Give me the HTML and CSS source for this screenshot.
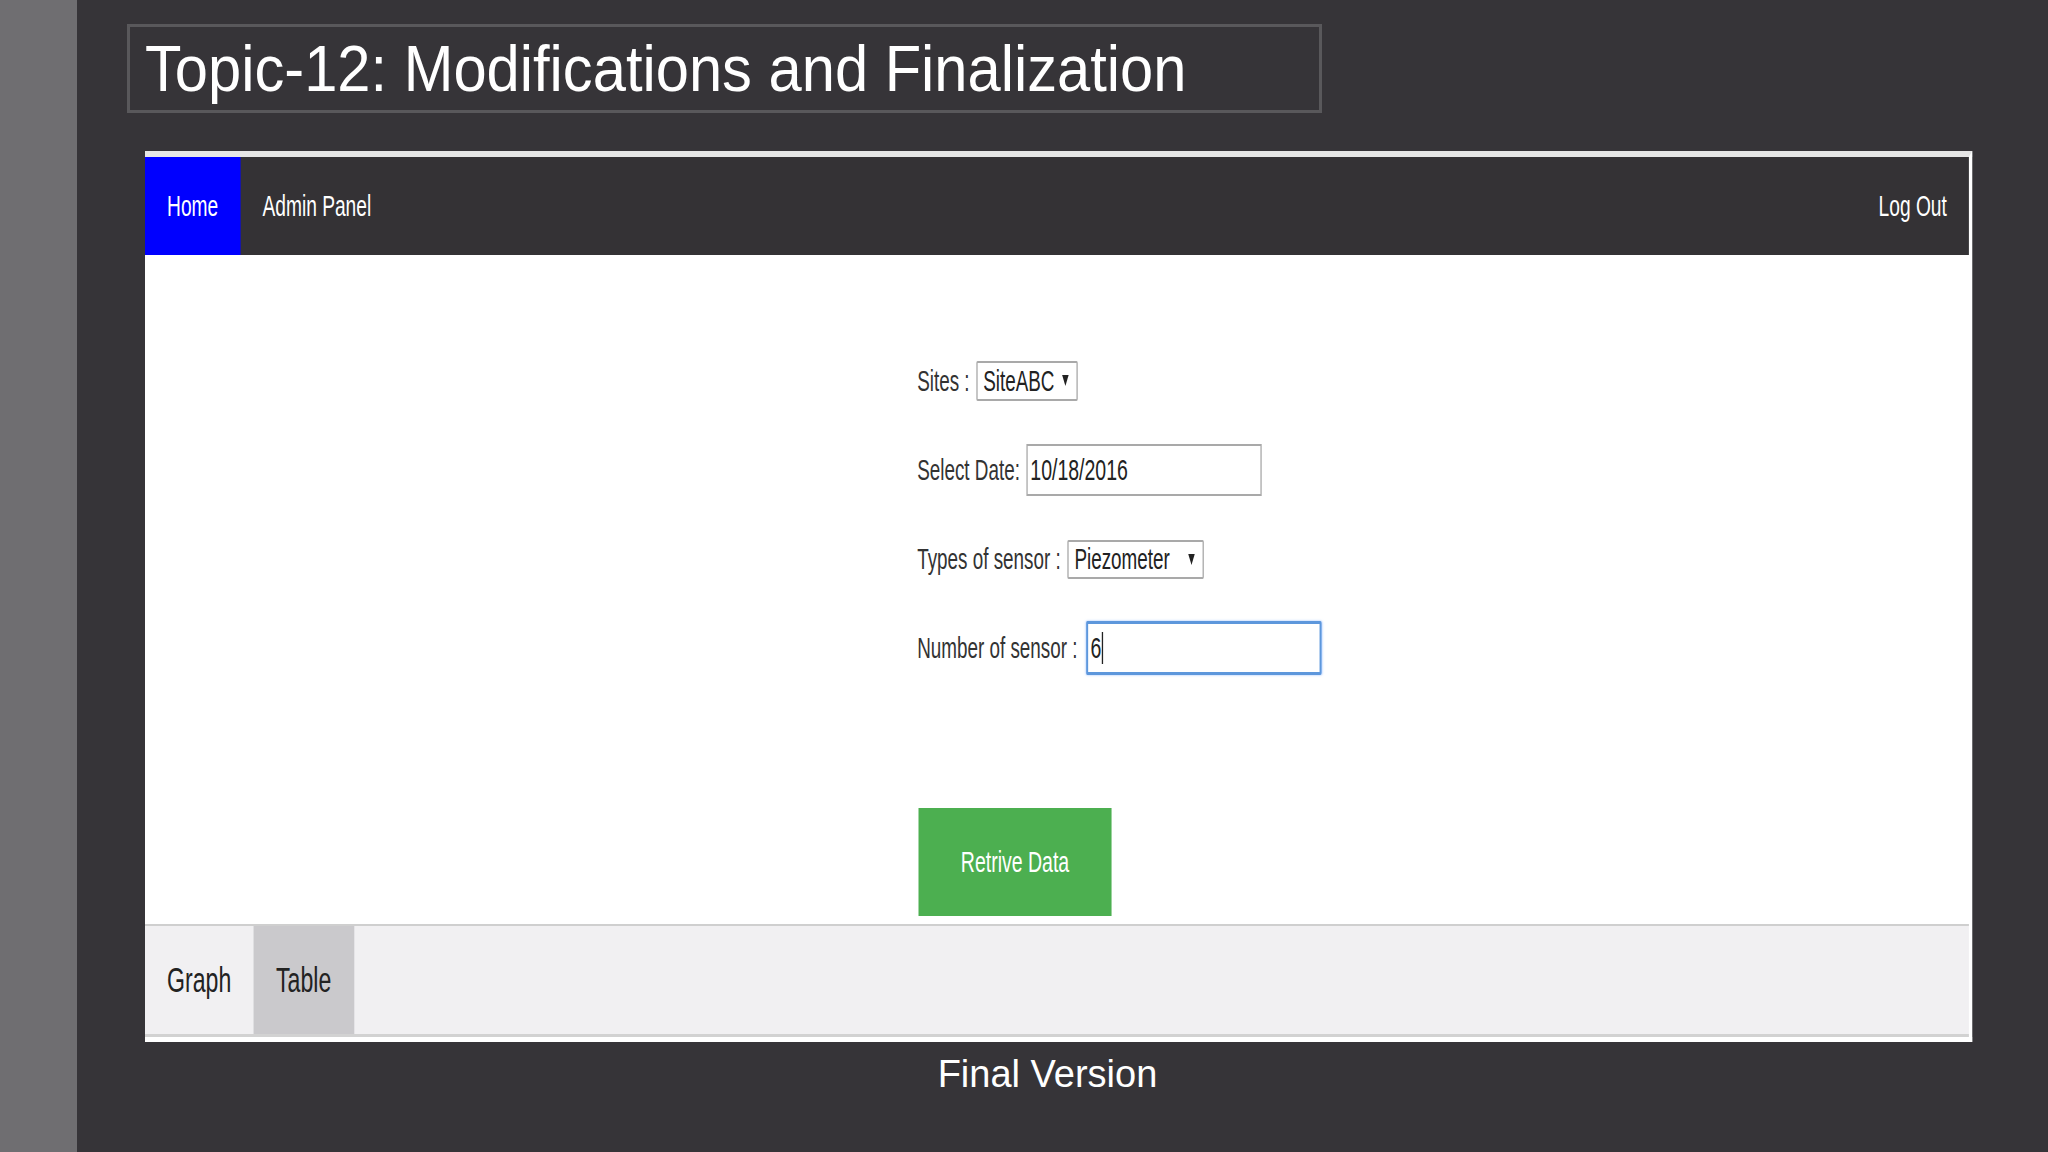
FILE: index.html
```html
<!DOCTYPE html>
<html lang="en">
<head>
    <meta charset="UTF-8">
    <meta name="viewport" content="width=device-width, initial-scale=1.0">
    <title>Topic-12: Modifications and Finalization</title>
    <link rel="stylesheet" href="styles.css">
</head>
<body>
    <div class="slide">
        <div class="side-strip"></div>

        <div class="stage">
            <!-- Slide title -->
            <div class="topic-box">
                <h1 class="topic-title"><span class="topic-text">Topic-12: Modifications and Finalization</span></h1>
            </div>

            <!-- Recorded app screen -->
            <div class="app-frame">
                <nav class="navbar">
                    <a class="nav-link active" href="#">Home</a>
                    <a class="nav-link" href="#">Admin Panel</a>
                    <a class="nav-link logout" href="#">Log Out</a>
                </nav>

                <div class="content">
                    <form class="query-form">
                        <div class="form-row">
                            <label for="sites">Sites :</label>
                            <span class="select-wrap sites-select">
                                <select id="sites">
                                    <option>SiteABC</option>
                                </select>
                            </span>
                        </div>
                        <div class="form-row">
                            <label for="date">Select Date:</label>
                            <input class="text-input" id="date" type="text" value="10/18/2016">
                        </div>
                        <div class="form-row">
                            <label for="sensor-type">Types of sensor :</label>
                            <span class="select-wrap type-select">
                                <select id="sensor-type">
                                    <option>Piezometer</option>
                                </select>
                            </span>
                        </div>
                        <div class="form-row wide-gap">
                            <label for="sensor-count">Number of sensor :</label>
                            <span class="focus-input"><input class="text-input focused" id="sensor-count" type="text" value="6"><span class="caret"></span></span>
                        </div>
                    </form>

                    <button class="retrieve-btn" type="button">Retrive Data</button>
                </div>

                <div class="tab-bar">
                    <span class="tab">Graph</span>
                    <span class="tab selected">Table</span>
                </div>
            </div>

            <p class="caption">Final Version</p>
        </div>
    </div>
</body>
</html>
```

FILE: styles.css
```css
/* Global */
html, body {
    margin: 0;
    padding: 0;
    height: 100%;
    overflow: hidden;
    background-color: #363438;
    font-family: "Liberation Sans", Arial, sans-serif;
}

.slide {
    display: flex;
    height: 1152px;
    overflow: hidden;
}

.side-strip {
    width: 77px;
    flex-shrink: 0;
    background-color: #6f6e71;
}

.stage {
    flex-grow: 1;
    min-width: 0;
    padding: 24px 0 0 50px;
    overflow: hidden;
}

/* Slide title */
.topic-box {
    width: 1195px;
    height: 89px;
    box-sizing: border-box;
    border: 3px solid #59585b;
}

.topic-title {
    margin: 0;
    padding-left: 15px;
    font-size: 65px;
    font-weight: normal;
    line-height: 83px;
    color: #fff;
    white-space: nowrap;
}

.topic-text {
    display: inline-block;
    transform: scaleX(0.918);
    transform-origin: left center;
}

/* App screen (recorded squeezed horizontally) */
.app-frame {
    width: 2811px;
    box-sizing: border-box;
    margin: 38px 0 0 18px;
    border-top: 6px solid #e6e6e6;
    border-right: 5px solid #fff;
    border-bottom: 5px solid #fff;
    background-color: #fff;
    transform: scaleX(0.65);
    transform-origin: 0 0;
}

.navbar {
    display: flex;
    align-items: stretch;
    height: 98px;
    background-color: #343235;
}

.nav-link {
    display: flex;
    align-items: center;
    padding: 0 34px;
    font-size: 29.5px;
    color: #fff;
    text-decoration: none;
}

.nav-link.active {
    background-color: #0000ff;
}

.nav-link.logout {
    margin-left: auto;
}

/* Form */
.content {
    height: 669px;
    box-sizing: border-box;
    padding-top: 99px;
}

.query-form {
    display: flex;
    flex-direction: column;
    gap: 35px;
    padding-left: 1188px;
}

.form-row {
    display: flex;
    align-items: center;
    gap: 10px;
    height: 54px;
    font-size: 29px;
    color: #333;
}

.form-row.wide-gap {
    gap: 13px;
}

.select-wrap {
    position: relative;
    display: inline-block;
}

.select-wrap select {
    appearance: none;
    -webkit-appearance: none;
    height: 40px;
    box-sizing: border-box;
    border: 2px solid #a9a9a9;
    border-radius: 2px;
    background-color: #fff;
    padding: 0 0 0 9px;
    font-family: inherit;
    font-size: 29px;
    color: #222;
}

.sites-select select {
    width: 156px;
}

.type-select select {
    width: 210px;
    height: 39px;
}

.select-wrap::after {
    content: "";
    position: absolute;
    top: 14px;
    right: 14px;
    border-left: 5px solid transparent;
    border-right: 5px solid transparent;
    border-top: 11px solid #222;
}

.text-input {
    width: 362px;
    height: 52px;
    box-sizing: border-box;
    border: 2px solid #a9a9a9;
    padding: 0 0 0 4px;
    font-family: inherit;
    font-size: 30px;
    color: #222;
    background-color: #fff;
}

.focus-input {
    position: relative;
    display: inline-block;
}

.text-input.focused {
    width: 362px;
    height: 54px;
    border: 3px solid #5d97dc;
    border-radius: 2px;
    box-shadow: 0 0 3px rgba(77, 144, 254, 0.6);
    outline: none;
}

.caret {
    position: absolute;
    left: 24px;
    top: 11px;
    width: 2px;
    height: 32px;
    background-color: #222;
}

.retrieve-btn {
    display: block;
    width: 297px;
    height: 108px;
    margin: 133px 0 0 1190px;
    border: none;
    background-color: #4caf50;
    color: #fff;
    font-family: inherit;
    font-size: 30px;
    cursor: pointer;
}

/* Tabs */
.tab-bar {
    display: flex;
    height: 108px;
    border-top: 2px solid #cfcfcf;
    border-bottom: 3px solid #d2d2d2;
    background-color: #f1f0f2;
}

.tab {
    display: flex;
    align-items: center;
    padding: 0 34px;
    font-size: 35.5px;
    color: #222;
}

.tab.selected {
    padding: 0 35px;
    background-color: #cac9cc;
}

/* Caption */
.caption {
    width: 1805px;
    margin: 10px 0 0 18px;
    font-size: 38px;
    line-height: 44px;
    text-align: center;
    color: #fff;
}
```
